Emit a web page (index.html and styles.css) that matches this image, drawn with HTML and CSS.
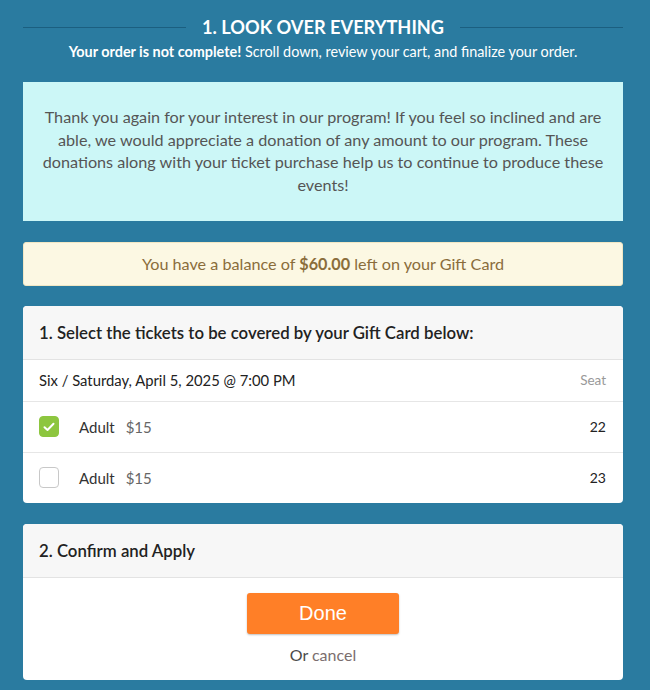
FILE: index.html
```html
<!DOCTYPE html>
<html lang="en">
<head>
<meta charset="utf-8">
<title>Look over everything</title>
<link rel="stylesheet" href="styles.css">
</head>
<body>
<div class="page">
  <div class="step-title">
    <span class="rule"></span>
    <h1>1. LOOK OVER EVERYTHING</h1>
    <span class="rule"></span>
  </div>
  <p class="step-sub"><strong>Your order is not complete!</strong> Scroll down, review your cart, and finalize your order.</p>

  <div class="donation">
    Thank you again for your interest in our program! If you feel so inclined and are able, we would appreciate a donation of any amount to our program. These donations along with your ticket purchase help us to continue to produce these events!
  </div>

  <div class="balance">You have a balance of <strong>$60.00</strong> left on your Gift Card</div>

  <div class="card">
    <div class="card-head">1. Select the tickets to be covered by your Gift Card below:</div>
    <div class="event-row">
      <span>Six / Saturday, April 5, 2025 @ 7:00 PM</span>
      <span class="seat-label">Seat</span>
    </div>
    <div class="ticket-row">
      <span class="check checked">
        <svg width="12" height="10" viewBox="0 0 12 10"><path d="M1.5 5.2 L4.5 8 L10.5 1.8" fill="none" stroke="#fff" stroke-width="2" stroke-linecap="round" stroke-linejoin="round"/></svg>
      </span>
      <span class="ticket-type">Adult</span>
      <span class="ticket-price">$15</span>
      <span class="seat">22</span>
    </div>
    <div class="ticket-row">
      <span class="check"></span>
      <span class="ticket-type">Adult</span>
      <span class="ticket-price">$15</span>
      <span class="seat">23</span>
    </div>
  </div>

  <div class="card">
    <div class="card-head">2. Confirm and Apply</div>
    <div class="confirm">
      <button class="done">Done</button>
      <p class="or">Or <a href="#">cancel</a></p>
    </div>
  </div>
</div>
</body>
</html>
```
FILE: styles.css
```css
* { box-sizing: border-box; }
html, body { margin: 0; padding: 0; }
body {
  background: #2a7ba0;
  font-family: Lato, "Noto Sans", sans-serif;
  color: #333;
}
.page {
  width: 600px;
  margin: 0 0 0 23px;
  padding: 16px 0 10px;
}
.step-title {
  display: flex;
  align-items: center;
  gap: 16px;
}
.rule {
  flex: 1;
  height: 1px;
  background: #1b5f80;
}
.step-title h1 {
  margin: 0;
  color: #fff;
  font-size: 18.2px;
  font-weight: 700;
  line-height: 22px;
}
.step-sub {
  margin: 5px 0 21px;
  text-align: center;
  color: #fff;
  font-size: 14.4px;
  line-height: 18px;
}
.step-sub strong { font-weight: 700; }
.donation {
  background: #ccf7f7;
  padding: 24px 16px 24px;
  text-align: center;
  font-size: 16.2px;
  line-height: 22.7px;
  color: #555;
  margin-bottom: 21px;
}
.balance {
  background: #fcf8e3;
  border: 1px solid #f1e7c4;
  border-radius: 3px;
  padding: 11px 12px;
  text-align: center;
  font-size: 16.2px;
  line-height: 20px;
  color: #8a6d3b;
  margin-bottom: 20px;
}
.card {
  background: #fff;
  border-radius: 4px;
  overflow: hidden;
  margin-bottom: 21px;
}
.card-head {
  background: #f7f7f7;
  border-bottom: 1px solid #e3e3e3;
  padding: 16px 16px;
  font-size: 16.8px;
  font-weight: 600;
  line-height: 21px;
  color: #222;
}
.event-row {
  display: flex;
  justify-content: space-between;
  align-items: center;
  height: 42px;
  padding: 0 17px 0 16px;
  border-bottom: 1px solid #e6e6e6;
  font-size: 14.8px;
  color: #222;
}
.seat-label { color: #999; font-size: 13.5px; }
.ticket-row {
  display: flex;
  align-items: center;
  height: 51px;
  padding: 0 17px 0 16px;
  border-bottom: 1px solid #e6e6e6;
  font-size: 15px;
}
.ticket-row:last-child { border-bottom: 0; height: 50px; }
.check {
  width: 20px;
  height: 21px;
  border: 1px solid #c8c8c8;
  border-radius: 4px;
  display: flex;
  align-items: center;
  justify-content: center;
  margin-right: 20px;
}
.check.checked {
  background: #8dc63f;
  border-color: #8dc63f;
}
.ticket-type { color: #333; margin-right: 11px; }
.ticket-price { color: #666; }
.seat { margin-left: auto; color: #222; font-size: 14px; }
.confirm {
  padding: 15px 16px 15px;
  display: flex;
  flex-direction: column;
  align-items: center;
}
.done {
  width: 152px;
  height: 41px;
  background: #ff7f27;
  border: 0;
  border-radius: 3px;
  box-shadow: 0 1px 2px rgba(0,0,0,0.25);
  color: #fff;
  font-family: "Liberation Sans", Arial, sans-serif;
  font-size: 20px;
  cursor: pointer;
}
.or {
  margin: 11px 0 0;
  font-size: 16px;
  line-height: 20px;
  color: #4a4a4a;
}
.or a { color: #7b6e6e; text-decoration: none; }
```
